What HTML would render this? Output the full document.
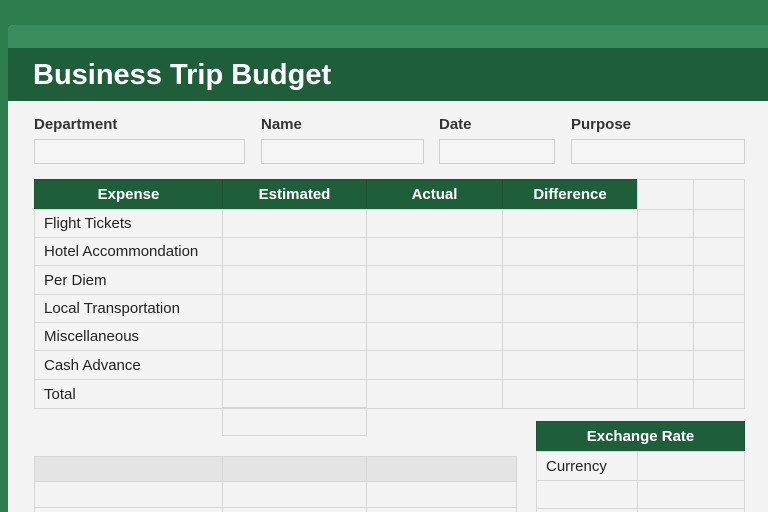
<!DOCTYPE html>
<html><head><style>
*{margin:0;padding:0;box-sizing:border-box}
html,body{width:768px;height:512px;overflow:hidden}
body{background:#2d7d4f;font-family:"Liberation Sans",sans-serif}
#w{position:relative;width:768px;height:512px;overflow:hidden}
.a{position:absolute}
.card{left:8px;top:25px;width:760px;height:487px;background:#f3f3f3;border-radius:6px 0 0 0;overflow:hidden}
.strip{left:0;top:0;width:100%;height:23px;background:#3a8c5e}
.hdr{left:0;top:23px;width:100%;height:53px;background:#1f5e3b}
.title{left:25px;top:34px;color:#fff;font-size:29px;font-weight:bold}
.lbl{font-size:15px;font-weight:bold;color:#333}
.inp{border:1px solid #cfcfcf;background:#f5f5f5;height:25px}
.c{position:absolute;border:1px solid #d6d6d6;font-size:15px;color:#222;padding-left:9px;display:flex;align-items:center}
.g{background:#1f5e3b;color:#fff;font-weight:bold;justify-content:center;padding:0;border-color:#1a5233}
.gr{background:#e4e4e4}
</style></head><body><div id="w">
<div class="a card">
<div class="a strip"></div>
<div class="a hdr"></div>
<div class="a title">Business Trip Budget</div>
</div>
<div class="a lbl" style="left:34px;top:116px">Department</div>
<div class="a lbl" style="left:261px;top:116px">Name</div>
<div class="a lbl" style="left:439px;top:116px">Date</div>
<div class="a lbl" style="left:571px;top:116px">Purpose</div>
<div class="a inp" style="left:34px;top:139px;width:211px"></div>
<div class="a inp" style="left:261px;top:139px;width:163px"></div>
<div class="a inp" style="left:439px;top:139px;width:116px"></div>
<div class="a inp" style="left:571px;top:139px;width:174px"></div>

<div class="c g" style="left:34px;top:179px;width:189px;height:31px">Expense</div>
<div class="c g" style="left:222px;top:179px;width:145px;height:31px">Estimated</div>
<div class="c g" style="left:366px;top:179px;width:137px;height:31px">Actual</div>
<div class="c g" style="left:502px;top:179px;width:136px;height:31px">Difference</div>
<div class="c" style="left:637px;top:179px;width:57px;height:31px"></div>
<div class="c" style="left:693px;top:179px;width:52px;height:31px"></div>

<div id="rows"></div>

<div class="c" style="left:222px;top:407px;width:145px;height:29px"></div>

<div class="c gr" style="left:34px;top:456px;width:189px;height:26px"></div>
<div class="c gr" style="left:222px;top:456px;width:145px;height:26px"></div>
<div class="c gr" style="left:366px;top:456px;width:151px;height:26px"></div>
<div class="c" style="left:34px;top:481px;width:189px;height:27px"></div>
<div class="c" style="left:222px;top:481px;width:145px;height:27px"></div>
<div class="c" style="left:366px;top:481px;width:151px;height:27px"></div>
<div class="c" style="left:34px;top:507px;width:189px;height:5px;border-bottom:none"></div>
<div class="c" style="left:222px;top:507px;width:145px;height:5px;border-bottom:none"></div>
<div class="c" style="left:366px;top:507px;width:151px;height:5px;border-bottom:none"></div>

<div class="c g" style="left:536px;top:421px;width:209px;height:31px">Exchange Rate</div>
<div class="c" style="left:536px;top:451px;width:102px;height:30px">Currency</div>
<div class="c" style="left:637px;top:451px;width:108px;height:30px"></div>
<div class="c" style="left:536px;top:480px;width:102px;height:29px"></div>
<div class="c" style="left:637px;top:480px;width:108px;height:29px"></div>
<div class="c" style="left:536px;top:508px;width:102px;height:4px;border-bottom:none"></div>
<div class="c" style="left:637px;top:508px;width:108px;height:4px;border-bottom:none"></div>

<div class="c" style="left:34px;top:209px;width:189px;height:29px">Flight Tickets</div>
<div class="c" style="left:34px;top:237px;width:189px;height:29px">Hotel Accommondation</div>
<div class="c" style="left:34px;top:265px;width:189px;height:30px">Per Diem</div>
<div class="c" style="left:34px;top:294px;width:189px;height:29px">Local Transportation</div>
<div class="c" style="left:34px;top:322px;width:189px;height:29px">Miscellaneous</div>
<div class="c" style="left:34px;top:350px;width:189px;height:30px">Cash Advance</div>
<div class="c" style="left:34px;top:379px;width:189px;height:30px">Total</div>
</div>
<script>
var tops=[209,237,265,294,322,350,379,408];
var cols=[[222,145],[366,137],[502,136],[637,57],[693,52]];
var h="";
for(var i=0;i<7;i++){for(var j=0;j<5;j++){h+='<div class="c" style="left:'+cols[j][0]+'px;top:'+tops[i]+'px;width:'+cols[j][1]+'px;height:'+(tops[i+1]-tops[i]+1)+'px"></div>';}}
document.getElementById("rows").innerHTML=h;
</script>
</body></html>
